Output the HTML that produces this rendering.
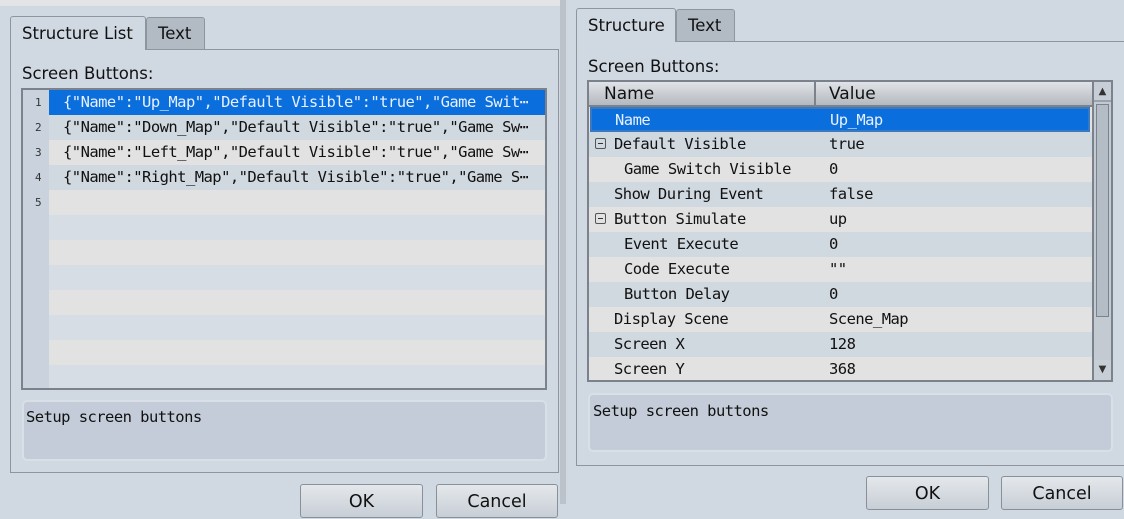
<!DOCTYPE html>
<html><head><style>
*{margin:0;padding:0;box-sizing:border-box}
body{width:1124px;height:504px;position:relative;overflow:hidden;background:#d0d8e2;font-family:"DejaVu Sans","Liberation Sans",sans-serif;font-size:16.5px;color:#111}
.a{position:absolute}
.mono{font-family:"DejaVu Sans Mono","Liberation Mono",monospace;font-size:15.5px;letter-spacing:-0.55px}
.tab{position:absolute;border:1px solid #8e959e;border-bottom:none;padding:0 0 0 11px;line-height:34px;border-radius:3px 3px 0 0}
.btn{position:absolute;border:1px solid #8a9098;border-radius:3px;background:linear-gradient(#e4e8ec,#c8ced6);text-align:center;font-size:17.5px;line-height:34px}
.row{position:absolute;height:25px;line-height:25px;white-space:nowrap;overflow:hidden}
.desc{position:absolute;border:2px solid #d8dfe7;border-radius:5px;background:#c3ccd8}
.mn{display:inline-block;width:11px;height:11px;border:1px solid #555;border-radius:2px;position:relative;vertical-align:middle;margin-top:-3px}
.mn:after{content:"";position:absolute;left:2px;right:2px;top:4px;height:1px;background:#333}
</style></head><body>
<div class="a" style="left:0;top:0;width:560px;height:6px;background:#e2e4e6"></div>
<div class="a" style="left:560px;top:0;width:6px;height:504px;background:#bcc2ca"></div>
<div class="a" style="left:566px;top:0;width:558px;height:504px;background:#d0d8e2"></div>

<!-- LEFT -->
<div class="a" style="left:10px;top:49px;width:549px;height:424px;border:1px solid #8e959e;background:#d0d8e2"></div>
<div class="tab" style="left:10px;top:16px;width:136px;height:34px;background:#d0d8e2">Structure List</div>
<div class="tab" style="left:146px;top:17px;width:59px;height:32px;background:#b2bac4;padding-left:11px;line-height:32px">Text</div>
<div class="a" style="left:22px;top:64px">Screen Buttons:</div>
<div class="a" style="left:21px;top:88px;width:526px;height:302px;border:2px solid #7b828b;background:#e2e2e2;overflow:hidden">
 <div class="a" style="left:0;top:0;width:26px;height:300px;background:#c9d2dd"></div>
 <div class="a mono" style="left:0;top:0;width:524px">
  <div class="row" style="top:0;left:26px;width:498px;background:#0a6edc"></div>
  <div class="row" style="top:25px;left:26px;width:498px;background:#d0d8e0"></div>
  <div class="row" style="top:50px;left:26px;width:498px;background:#e2e2e2"></div>
  <div class="row" style="top:75px;left:26px;width:498px;background:#d0d8e0"></div>
  <div class="row" style="top:100px;left:26px;width:498px;background:#e2e2e2"></div>
  <div class="row" style="top:125px;left:26px;width:498px;background:#d6dde4"></div>
  <div class="row" style="top:150px;left:26px;width:498px;background:#e2e2e2"></div>
  <div class="row" style="top:175px;left:26px;width:498px;background:#d6dde4"></div>
  <div class="row" style="top:200px;left:26px;width:498px;background:#e2e2e2"></div>
  <div class="row" style="top:225px;left:26px;width:498px;background:#d6dde4"></div>
  <div class="row" style="top:250px;left:26px;width:498px;background:#e2e2e2"></div>
  <div class="row" style="top:275px;left:26px;width:498px;background:#d6dde4"></div>
  <div class="row" style="top:0;left:12px;font-size:11px;color:#333">1</div>
  <div class="row" style="top:25px;left:12px;font-size:11px;color:#333">2</div>
  <div class="row" style="top:50px;left:12px;font-size:11px;color:#333">3</div>
  <div class="row" style="top:75px;left:12px;font-size:11px;color:#333">4</div>
  <div class="row" style="top:100px;left:12px;font-size:11px;color:#333">5</div>
  <div class="row" style="top:0;left:40px;color:#e8f0ff">{"Name":"Up_Map","Default Visible":"true","Game Swit⋯</div>
  <div class="row" style="top:25px;left:40px">{"Name":"Down_Map","Default Visible":"true","Game Sw⋯</div>
  <div class="row" style="top:50px;left:40px">{"Name":"Left_Map","Default Visible":"true","Game Sw⋯</div>
  <div class="row" style="top:75px;left:40px">{"Name":"Right_Map","Default Visible":"true","Game S⋯</div>
 </div>
</div>
<div class="desc mono" style="left:22px;top:400px;width:525px;height:61px;padding:6px 0 0 2px">Setup screen buttons</div>
<div class="btn" style="left:300px;top:484px;width:123px;height:34px">OK</div>
<div class="btn" style="left:436px;top:484px;width:122px;height:34px">Cancel</div>

<!-- RIGHT -->
<div class="a" style="left:576px;top:41px;width:560px;height:425px;border:1px solid #8e959e;background:#d0d8e2"></div>
<div class="tab" style="left:576px;top:8px;width:100px;height:34px;background:#d0d8e2">Structure</div>
<div class="tab" style="left:676px;top:9px;width:59px;height:32px;background:#b2bac4;line-height:32px">Text</div>
<div class="a" style="left:588px;top:57px">Screen Buttons:</div>
<div class="a" style="left:587px;top:80px;width:526px;height:302px;border:2px solid #7b828b;background:#e2e2e2;overflow:hidden">
 <div class="a" style="left:0;top:0;width:503px;height:25px;background:linear-gradient(#e0e3e7,#b4b9bf);border-bottom:2px solid #7b828b;font-size:17px;line-height:24px">
  <span class="a" style="left:15px">Name</span>
  <div class="a" style="left:225px;top:0;width:2px;height:25px;background:#7b828b"></div>
  <span class="a" style="left:240px">Value</span>
 </div>
 <div class="a mono" style="left:0;top:25px;width:503px">
  <div class="row" style="top:0;left:1px;width:500px;background:#0a6edc;border:2px solid #3a78c0;color:#e8f0ff;line-height:23px"><span class="a" style="left:23px">Name</span><span class="a" style="left:238px">Up_Map</span></div>
  <div class="row" style="top:25px;width:503px;background:#d0d8e0"><span class="a" style="left:6px"><i class="mn"></i></span><span class="a" style="left:25px">Default Visible</span><span class="a" style="left:240px">true</span></div>
  <div class="row" style="top:50px;width:503px;background:#e2e2e2"><span class="a" style="left:35px">Game Switch Visible</span><span class="a" style="left:240px">0</span></div>
  <div class="row" style="top:75px;width:503px;background:#d0d8e0"><span class="a" style="left:25px">Show During Event</span><span class="a" style="left:240px">false</span></div>
  <div class="row" style="top:100px;width:503px;background:#e2e2e2"><span class="a" style="left:6px"><i class="mn"></i></span><span class="a" style="left:25px">Button Simulate</span><span class="a" style="left:240px">up</span></div>
  <div class="row" style="top:125px;width:503px;background:#d0d8e0"><span class="a" style="left:35px">Event Execute</span><span class="a" style="left:240px">0</span></div>
  <div class="row" style="top:150px;width:503px;background:#e2e2e2"><span class="a" style="left:35px">Code Execute</span><span class="a" style="left:240px">""</span></div>
  <div class="row" style="top:175px;width:503px;background:#d0d8e0"><span class="a" style="left:35px">Button Delay</span><span class="a" style="left:240px">0</span></div>
  <div class="row" style="top:200px;width:503px;background:#e2e2e2"><span class="a" style="left:25px">Display Scene</span><span class="a" style="left:240px">Scene_Map</span></div>
  <div class="row" style="top:225px;width:503px;background:#d0d8e0"><span class="a" style="left:25px">Screen X</span><span class="a" style="left:240px">128</span></div>
  <div class="row" style="top:250px;width:503px;background:#e2e2e2"><span class="a" style="left:25px">Screen Y</span><span class="a" style="left:240px">368</span></div>
 </div>
 <div class="a" style="left:503px;top:0;width:19px;height:300px;background:#c4cad2;border-left:2px solid #7b828b">
  <div class="a" style="left:0;top:0;width:17px;height:20px;background:#c8ced6;border-bottom:2px solid #9aa1aa;color:#333;font-size:10px;text-align:center;line-height:20px">▲</div>
  <div class="a" style="left:2px;top:22px;width:13px;height:213px;background:#b4bcc6;border:1px solid #7b828b"></div>
  <div class="a" style="left:0;top:278px;width:17px;height:20px;background:#c8ced6;color:#333;font-size:10px;text-align:center;line-height:20px">▼</div>
 </div>
</div>
<div class="desc mono" style="left:588px;top:393px;width:525px;height:59px;padding:7px 0 0 3px">Setup screen buttons</div>
<div class="btn" style="left:866px;top:476px;width:123px;height:34px">OK</div>
<div class="btn" style="left:1001px;top:476px;width:122px;height:34px">Cancel</div>
</body></html>
